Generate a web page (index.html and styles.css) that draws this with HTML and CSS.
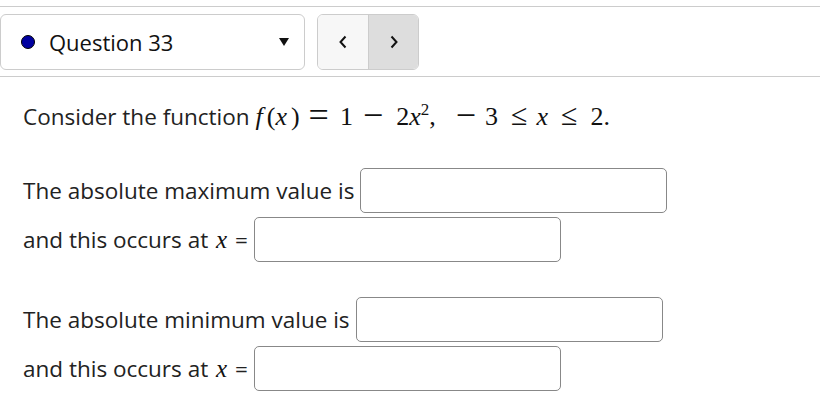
FILE: index.html
```html
<!DOCTYPE html>
<html lang="en">
<head>
  <meta charset="UTF-8">
  <title>Question 33</title>
  <link rel="stylesheet" href="styles.css">
</head>
<body>

  <!-- Question navigation -->
  <div class="nav">
    <div class="question-select">
      <span class="dot"></span>
      <span class="q-label">Question 33</span>
      <svg class="caret" width="10" height="8" viewBox="0 0 10 8"><polygon points="0,0 10,0 5,8" fill="#111"/></svg>
    </div>
    <div class="pager">
      <button class="prev" aria-label="Previous">
        <svg width="10" height="14" viewBox="0 0 10 14"><polyline points="7.5,1.5 2.5,7 7.5,12.5" fill="none" stroke="#111" stroke-width="2"/></svg>
      </button>
      <button class="next" aria-label="Next">
        <svg width="10" height="14" viewBox="0 0 10 14"><polyline points="2.5,1.5 7.5,7 2.5,12.5" fill="none" stroke="#111" stroke-width="2"/></svg>
      </button>
    </div>
  </div>

  <!-- Problem -->
  <div class="problem">
    <p class="intro">Consider the function <span class="math"><i class="fn">f</i>(<i class="arg">x</i>)<span class="eq">=</span>1<span class="bin">−</span>2<i>x</i><sup>2</sup>,<span class="quad"></span><span class="neg">−</span>3<span class="rel le">≤</span><i>x</i><span class="rel">≤</span>2.</span></p>

    <div class="answer-group">
      <div class="row">
        <span>The absolute maximum value is</span>
        <input type="text" class="answer">
      </div>
      <div class="row">
        <span>and this occurs at <span class="math small"><i>x</i></span> =</span>
        <input type="text" class="answer">
      </div>
    </div>

    <div class="answer-group">
      <div class="row">
        <span>The absolute minimum value is</span>
        <input type="text" class="answer">
      </div>
      <div class="row">
        <span>and this occurs at <span class="math small"><i>x</i></span> =</span>
        <input type="text" class="answer">
      </div>
    </div>
  </div>

</body>
</html>
```

FILE: styles.css
```css
body {
  font-family: 'Open Sans', sans-serif;
  color: #222;
  background-color: #fff;
  margin: 0;
  padding: 0;
}

/* Top navigation bar */
.nav {
  margin-top: 6px;
  border-top: 1px solid #ccc;
  border-bottom: 1px solid #ccc;
  padding: 7px 0 6px;
  display: flex;
  gap: 12px;
}

.question-select {
  width: 305px;
  height: 56px;
  box-sizing: border-box;
  border: 1px solid #ccc;
  border-radius: 6px;
  display: flex;
  align-items: center;
  padding: 0 15px 0 20px;
}

.dot {
  width: 14px;
  height: 14px;
  border-radius: 50%;
  background-color: #0000a0;
  border: 1.5px solid #000;
  box-sizing: border-box;
  margin-right: 14px;
}

.q-label {
  flex: 1;
  font-size: 22px;
  color: #111;
}

.pager {
  display: flex;
  height: 56px;
  border: 1px solid #ccc;
  border-radius: 6px;
  overflow: hidden;
  box-sizing: border-box;
}

.pager button {
  width: 50px;
  border: none;
  padding: 0;
  background-color: #f7f7f7;
  display: flex;
  align-items: center;
  justify-content: center;
  cursor: pointer;
}

.pager .next {
  background-color: #ddd;
  border-left: 1px solid #ccc;
}

/* Problem body */
.problem {
  padding: 25px 23px 0;
  font-size: 22.5px;
}

.intro {
  margin: 0 0 36px;
  line-height: 30px;
}

.math {
  font-family: 'Liberation Serif', 'Times New Roman', serif;
  font-size: 26px;
  line-height: 20px;
  color: #111;
}

.math.small {
  font-size: 25px;
  margin: 0 2px;
}

.math sup {
  font-size: 17px;
  line-height: 0;
  vertical-align: 10px;
}

.math .fn {
  margin-right: 4px;
}

.math .arg {
  margin-right: 4px;
}

.math .rel {
  font-size: 30px;
  margin: 0 13px;
}

.math .rel.le {
  margin-right: 9px;
}

.math .eq,
.math .bin,
.math .neg {
  font-size: 36px;
  vertical-align: -2px;
}

.math .eq {
  margin: 0 11px 0 9px;
}

.math .bin {
  margin: 0 13px 0 10px;
}

.math .neg {
  margin-right: 9px;
}

.math .quad {
  display: inline-block;
  width: 20px;
}

.answer-group {
  margin-bottom: 35px;
}

.row {
  display: flex;
  align-items: center;
  gap: 6px;
  margin-bottom: 4px;
}

.answer {
  width: 307px;
  height: 45px;
  box-sizing: border-box;
  border: 1px solid #888;
  border-radius: 5px;
  font-size: 18px;
  outline: none;
}
```
